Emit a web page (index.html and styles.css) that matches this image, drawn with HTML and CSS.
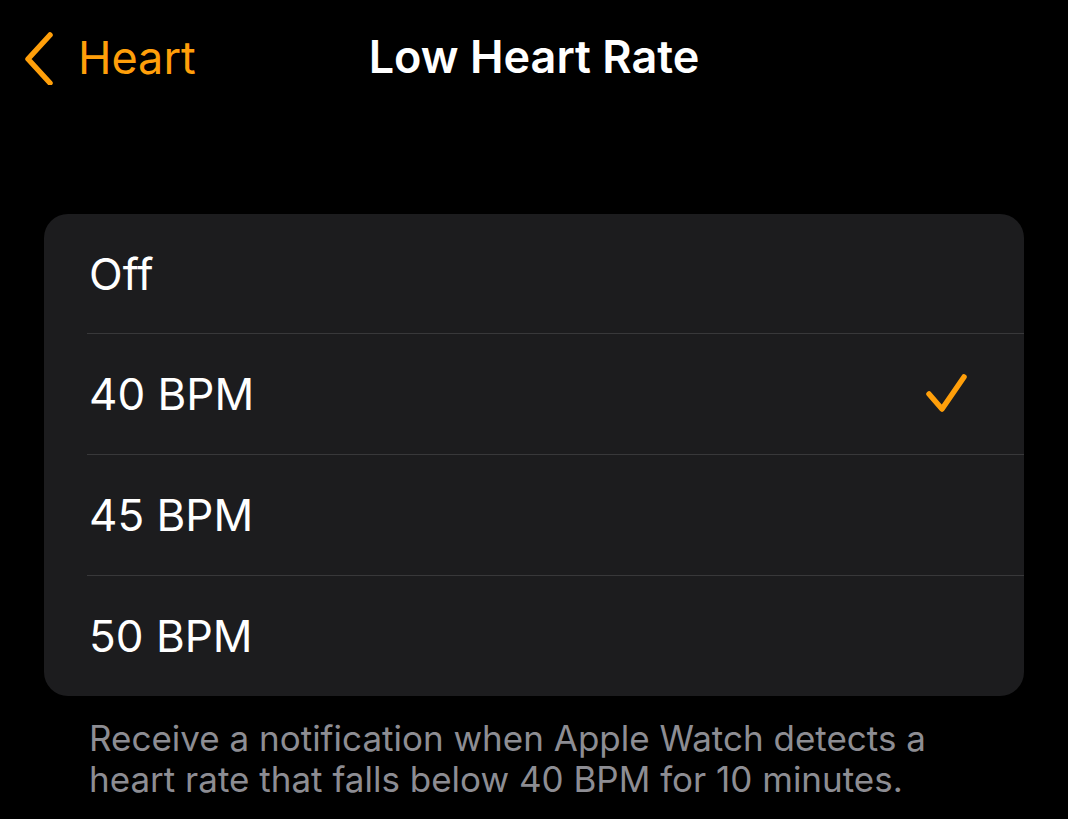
FILE: index.html
```html
<!DOCTYPE html>
<html>
<head>
<meta charset="utf-8">
<title>Low Heart Rate</title>
<link rel="stylesheet" href="styles.css">
</head>
<body>
	<div class="navbar">
		<a class="back" href="#">
			<svg class="chevron" width="34" height="54" viewBox="0 0 34 54">
				<polyline points="28,4 6,28 28,52" fill="none" stroke="#ff9f0a" stroke-width="5.5" stroke-linecap="round" stroke-linejoin="round"/>
			</svg>
			<span>Heart</span>
		</a>
		<div class="title">Low Heart Rate</div>
	</div>

	<ul class="list">
		<li>Off</li>
		<li class="selected">40 BPM
			<svg class="check" width="46" height="42" viewBox="0 0 46 42">
				<polyline points="5,22 18,37 40,5" fill="none" stroke="#ff9f0a" stroke-width="5.5" stroke-linecap="round" stroke-linejoin="round"/>
			</svg>
		</li>
		<li>45 BPM</li>
		<li>50 BPM</li>
	</ul>

	<p class="footer">Receive a notification when Apple Watch detects a heart rate that falls below 40 BPM for 10 minutes.</p>
</body>
</html>
```

FILE: styles.css
```css
* {
	box-sizing: border-box;
}

body, ul, li, p {
	margin: 0;
	padding: 0;
}

body {
	background: #000;
	color: #fff;
	font-family: Inter, "Noto Sans", sans-serif;
	width: 1068px;
	height: 819px;
	overflow: hidden;
}

.navbar {
	position: relative;
	height: 116px;
	display: flex;
	align-items: flex-start;
	padding-top: 27px;
}

.back {
	display: flex;
	align-items: center;
	gap: 22px;
	padding-left: 22px;
	color: #ff9f0a;
	text-decoration: none;
	font-size: 45px;
	height: 60px;
}

.chevron {
	margin-top: 1px;
}

.title {
	position: absolute;
	left: 0;
	right: 0;
	top: 27px;
	height: 60px;
	line-height: 60px;
	text-align: center;
	font-size: 45px;
	font-weight: 600;
}

.list {
	list-style: none;
	margin: 98px 44px 0 44px;
	background: #1c1c1e;
	border-radius: 24px;
	overflow: hidden;
}

.list li {
	height: 121px;
	display: flex;
	align-items: center;
	justify-content: space-between;
	padding: 0 54px 0 45px;
	font-size: 44px;
	border-top: 1px solid #38383a;
	border-image: linear-gradient(to right, transparent 44px, #38383a 44px) 1;
}

.list li:first-child {
	border-top: 0;
	height: 119px;
}

.check {
	margin-top: -2px;
}

.footer {
	margin: 22px 90px 0 89px;
	color: #8d8d93;
	font-size: 35px;
	line-height: 41px;
}
```
